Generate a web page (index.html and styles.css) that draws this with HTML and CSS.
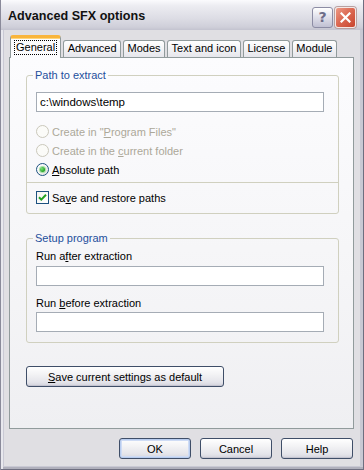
FILE: index.html
```html
<!DOCTYPE html>
<html>
<head>
<meta charset="utf-8">
<title>Advanced SFX options</title>
<link rel="stylesheet" href="styles.css">
</head>
<body>
<div class="window">
  <div class="titlebar">
    <span class="title">Advanced SFX options</span>
    <div class="caption-buttons">
      <span class="cap-btn cap-help">?</span>
      <span class="cap-btn cap-close"><svg width="11" height="11" viewBox="0 0 11 11"><path d="M1.5 1.5 L9.5 9.5 M9.5 1.5 L1.5 9.5" stroke="#fff" stroke-width="2.2" stroke-linecap="square"/></svg></span>
    </div>
  </div>
  <div class="client">
    <div class="tabs">
      <div class="tab selected"><span class="focus">General</span></div>
      <div class="tab">Advanced</div>
      <div class="tab">Modes</div>
      <div class="tab">Text and icon</div>
      <div class="tab">License</div>
      <div class="tab">Module</div>
    </div>
    <div class="panel">
      <fieldset class="group">
        <legend>Path to extract</legend>
        <div class="edit">c:\windows\temp</div>
        <div class="options">
          <div class="option disabled"><span class="radio"></span><span>Create in "<u>P</u>rogram Files"</span></div>
          <div class="option disabled"><span class="radio"></span><span>Create in the <u>c</u>urrent folder</span></div>
          <div class="option"><span class="radio on"><span class="dot"></span></span><span><u>A</u>bsolute path</span></div>
        </div>
        <div class="separator"></div>
        <div class="option check-row"><span class="check"><svg width="11" height="11" viewBox="0 0 11 11"><path d="M2 5.2 L4.3 7.6 L9 2.8" fill="none" stroke="#21a121" stroke-width="2"/></svg></span><span>Sa<u>v</u>e and restore paths</span></div>
      </fieldset>
      <fieldset class="group setup">
        <legend>Setup program</legend>
        <div class="field-label first">Run a<u>f</u>ter extraction</div>
        <div class="edit"></div>
        <div class="field-label">Run <u>b</u>efore extraction</div>
        <div class="edit"></div>
      </fieldset>
      <button class="btn wide"><u>S</u>ave current settings as default</button>
    </div>
    <div class="dialog-buttons">
      <button class="btn default">OK</button>
      <button class="btn">Cancel</button>
      <button class="btn">Help</button>
    </div>
  </div>
</div>
</body>
</html>
```

FILE: styles.css
```css
* { box-sizing: border-box; }
html, body { margin: 0; padding: 0; background: #ffffff; }
body {
  font-family: "Liberation Sans", Arial, sans-serif;
  font-size: 11px;
  color: #000;
}
.window {
  width: 364px;
  height: 470px;
  display: flex;
  flex-direction: column;
  background: #c9c9d4;
  padding: 0 4px 4px 4px;
  box-shadow: inset 1px 0 0 #8a8a9a, inset -1px 0 0 #6e6e80, inset 0 -1px 0 #6e6e80, inset 3px 0 0 #e8e8ee, inset 0 -3px 0 #b0b0bc;
}
.titlebar {
  height: 30px;
  margin: 0 -4px;
  display: flex;
  align-items: center;
  justify-content: space-between;
  padding: 0 7px 0 7px;
  background: linear-gradient(#fbfbfd 0%, #ececf1 20%, #dddde5 60%, #cfcfd9 90%, #c3c3cf 100%);
  border-left: 1px solid #8a8a9a;
  border-right: 1px solid #6e6e80;
}
.title {
  font-weight: bold;
  font-size: 12.6px;
  color: #111;
  padding-top: 2px;
}
.caption-buttons {
  display: flex;
  gap: 2px;
  padding-top: 4px;
}
.cap-btn {
  width: 21px;
  height: 21px;
  border-radius: 3px;
  display: flex;
  align-items: center;
  justify-content: center;
}
.cap-help {
  border: 1px solid #8c8ca4;
  background: linear-gradient(#ffffff, #e2e2ec 45%, #c0c0d2);
  color: #6c6c88;
  font-weight: bold;
  font-size: 14px;
  font-family: "DejaVu Sans", sans-serif;
}
.cap-close {
  border: 1px solid #f4e8e6;
  background: linear-gradient(135deg, #ec9a86, #dc6a54 45%, #c8442e);
  box-shadow: 0 0 0 1px #b8a0a0;
}
.client {
  flex: 1;
  display: flex;
  flex-direction: column;
  background: #e0dfe3;
  padding: 5px 6px 0 5px;
}
.tabs {
  display: flex;
  align-items: flex-end;
  height: 22px;
  padding-left: 1px;
  gap: 2px;
  position: relative;
  z-index: 2;
}
.tab {
  height: 17px;
  line-height: 14px;
  padding: 0 3.5px 2px 3.5px;
  border: 1px solid #919b9c;
  border-bottom: none;
  border-radius: 3px 3px 0 0;
  background: linear-gradient(#ffffff, #f3f3f5 50%, #e6e6ec);
  white-space: nowrap;
}
.tab.selected {
  height: 23px;
  margin-bottom: -1px;
  padding: 2px 4px 0 4px;
  background: #fcfcfe;
  border-top: 3px solid #f9b53c;
  box-shadow: inset 0 1px 0 #ffd57a;
}
.focus {
  display: inline-block;
  outline: 1px dotted #000;
  padding: 0 1px;
  line-height: 13px;
}
.panel {
  flex: 1;
  display: flex;
  flex-direction: column;
  align-items: flex-start;
  border: 1px solid #919b9c;
  background: linear-gradient(#fcfcfe, #f5f5f7 60%, #efeff2);
  padding: 11px 14px 0 16px;
}
.group {
  align-self: stretch;
  margin: 0;
  padding: 0 14px 6px 9px;
  border: 1px solid #d0d0bf;
  border-radius: 3px;
  min-width: 0;
}
.group legend {
  padding: 0 2px;
  margin-left: -3px;
  line-height: 13px;
  color: #1e4f9c;
}
.edit {
  height: 20px;
  border: 1px solid #a5acb5;
  background: #fff;
  padding: 0 3px;
  line-height: 18px;
  font-size: 11.5px;
}
.group > .edit:first-of-type { margin-top: 10px; }
.options {
  margin-top: 10px;
}
.option {
  display: flex;
  align-items: center;
  height: 19px;
  gap: 3px;
}
.options .option:first-child { margin-top: 1px; }
.option.disabled { color: #aca899; }
.radio {
  width: 13px;
  height: 13px;
  border-radius: 50%;
  border: 1px solid #1c5180;
  background: radial-gradient(circle at 65% 65%, #dcdcd7, #ffffff 75%);
  display: flex;
  align-items: center;
  justify-content: center;
  flex: none;
}
.option.disabled .radio {
  border-color: #cac8bb;
  background: #fbfbf8;
}
.dot {
  width: 5px;
  height: 5px;
  border-radius: 50%;
  background: radial-gradient(circle at 35% 35%, #7be17b, #21a121 70%);
  box-shadow: 0 0 0 1px #a6e3a6;
}
.separator {
  height: 1px;
  background: #d0d0bf;
  margin: 3px -14px 0 -9px;
}
.check-row { margin-top: 5px; }
.check {
  width: 13px;
  height: 13px;
  border: 1px solid #1c5180;
  background: linear-gradient(135deg, #f4f4f0, #ffffff);
  display: flex;
  align-items: center;
  justify-content: center;
  flex: none;
}
.group.setup {
  margin-top: 18px;
  padding-bottom: 10px;
}
.field-label {
  height: 14px;
  line-height: 14px;
  margin-top: 10px;
}
.field-label.first { margin-top: 4px; }
.setup .edit { margin-top: 2px; }
.setup .field-label.first + .edit { margin-top: 3px; }
.btn {
  font-family: "Liberation Sans", Arial, sans-serif;
  font-size: 11px;
  color: #000;
  width: 72px;
  height: 21px;
  padding: 0;
  border: 1px solid #3f4e68;
  border-radius: 3px;
  background: linear-gradient(#ffffff, #f2f2f4 40%, #e4e4ea 80%, #d2d2dc);
  box-shadow: inset 0 -1px 0 #c4c4d0;
}
.btn.wide {
  width: 198px;
  margin-top: 23px;
}
.btn.default {
  box-shadow: inset 0 0 0 1px #b8ccef, inset 0 0 0 2px #cfdcf5;
}
.dialog-buttons {
  height: 37px;
  display: flex;
  justify-content: flex-end;
  align-items: flex-start;
  gap: 9px;
  padding: 9px 1px 0 0;
}
```
